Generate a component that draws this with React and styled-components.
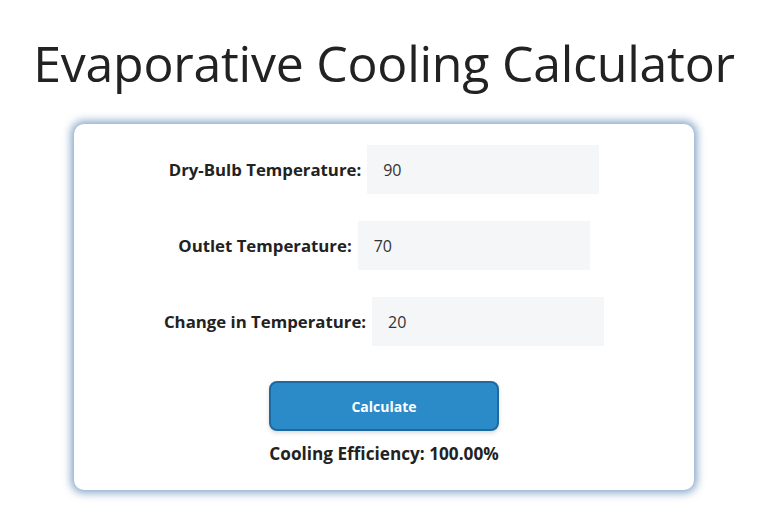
import React from 'react';
import styled, { createGlobalStyle } from 'styled-components';

const FIELDS = [
  { label: 'Dry-Bulb Temperature:', value: '90' },
  { label: 'Outlet Temperature:', value: '70' },
  { label: 'Change in Temperature:', value: '20' },
];

const GlobalStyle = createGlobalStyle`
  html, body {
    margin: 0;
    padding: 0;
    background: #fff;
  }
  body {
    font-family: "Open Sans", "Noto Sans", sans-serif;
    color: #222;
  }
`;

const Page = styled.div`
  width: 768px;
  height: 525px;
  display: flex;
  flex-direction: column;
  align-items: center;
`;

const Title = styled.h1`
  margin: 27px 0 0;
  font-size: 50px;
  font-weight: 400;
  line-height: 72px;
  color: #222;
  letter-spacing: -0.25px;
`;

const Card = styled.div`
  box-sizing: border-box;
  width: 620px;
  height: 366px;
  margin-top: 25px;
  padding: 21px 0 0;
  background: #fff;
  border-radius: 10px;
  box-shadow: 0 0 9px 3px rgba(70, 120, 170, 0.65);
  display: flex;
  flex-direction: column;
  align-items: center;
`;

const Row = styled.div`
  display: flex;
  align-items: center;
  gap: 6px;
  margin-bottom: 27px;
`;

const Label = styled.label`
  font-size: 16.8px;
  font-weight: 700;
  color: #222;
`;

const Input = styled.input`
  box-sizing: border-box;
  width: 232px;
  height: 49px;
  padding: 0 16px;
  border: none;
  outline: none;
  background: #f5f6f8;
  font-family: inherit;
  font-size: 16px;
  color: #333;
`;

const Button = styled.button`
  box-sizing: border-box;
  width: 230px;
  height: 50px;
  margin-top: 8px;
  background: #2a8bc8;
  border: 2px solid #1e6aa0;
  border-radius: 8px;
  color: #fff;
  font-family: inherit;
  font-size: 14px;
  font-weight: 700;
  box-shadow: 0 2px 4px rgba(0, 0, 0, 0.15);
`;

const Result = styled.div`
  margin-top: 11px;
  font-size: 17.2px;
  font-weight: 700;
  color: #222;
`;

export default function App() {
  return (
    <Page>
      <GlobalStyle />
      <Title>Evaporative Cooling Calculator</Title>
      <Card>
        {FIELDS.map((f) => (
          <Row key={f.label}>
            <Label>{f.label}</Label>
            <Input defaultValue={f.value} />
          </Row>
        ))}
        <Button>Calculate</Button>
        <Result>Cooling Efficiency: 100.00%</Result>
      </Card>
    </Page>
  );
}
